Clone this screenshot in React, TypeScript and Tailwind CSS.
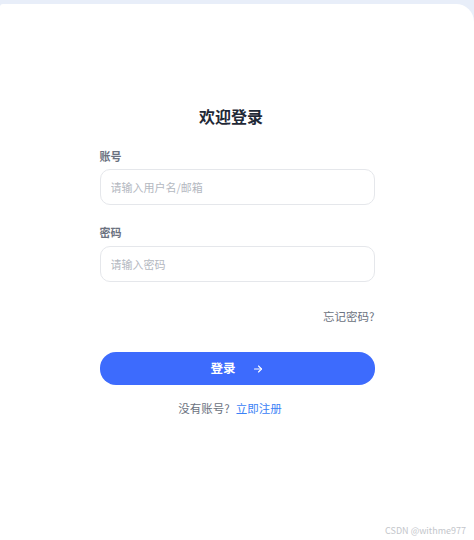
import React from 'react';

const font = { fontFamily: '"Noto Sans CJK SC", "Noto Sans", sans-serif' };

export default function App() {
  return (
    <div className="min-h-[540px] w-full bg-[#e8eef9] pt-[4px]" style={font}>
      <div className="relative flex min-h-[536px] flex-col items-center rounded-tl-[3px] rounded-tr-[18px] bg-white">
        <div className="w-[275px] pt-[98px]">
          <h1 className="pr-[12px] text-center text-[16px] font-bold leading-[28px] text-[#1f2937]">欢迎登录</h1>

          {/* 账号 */}
          <label className="mt-[18px] block text-[11px] font-bold leading-[16px] text-[#6b7280]">账号</label>
          <input
            className="mt-[5px] block h-[36px] w-full rounded-[10px] border border-[#e5e7eb] px-[10px] text-[11px] text-[#374151] outline-none placeholder:text-[#b4b8bf]"
            placeholder="请输入用户名/邮箱"
          />

          {/* 密码 */}
          <label className="mt-[19px] block text-[11px] font-bold leading-[16px] text-[#6b7280]">密码</label>
          <input
            type="password"
            className="mt-[6px] block h-[36px] w-full rounded-[10px] border border-[#e5e7eb] px-[10px] text-[11px] text-[#374151] outline-none placeholder:text-[#b4b8bf]"
            placeholder="请输入密码"
          />

          <div className="mt-[25px] text-right text-[11.5px] leading-[18px] text-[#6b7280]">忘记密码?</div>

          <button className="mt-[27px] flex h-[33px] w-full items-center justify-center gap-[16px] rounded-[16px] bg-[#3d6bfd] text-[12.5px] font-bold text-white">
            <span>登录</span>
            <svg width="12" height="12" viewBox="0 0 24 24" fill="none" stroke="currentColor" strokeWidth="2.2" strokeLinecap="round" strokeLinejoin="round">
              <path d="M5 12h14" />
              <path d="M13 6l6 6-6 6" />
            </svg>
          </button>

          <div className="mt-[14px] pr-[14px] text-center text-[11.5px] leading-[18px] text-[#6b7280]">
            没有账号?<span className="ml-[6px] text-[#3b82f6]">立即注册</span>
          </div>
        </div>

        <div className="absolute bottom-[3px] right-[8px] text-[9px] text-[#c3c6cb]">CSDN @withme977</div>
      </div>
    </div>
  );
}
